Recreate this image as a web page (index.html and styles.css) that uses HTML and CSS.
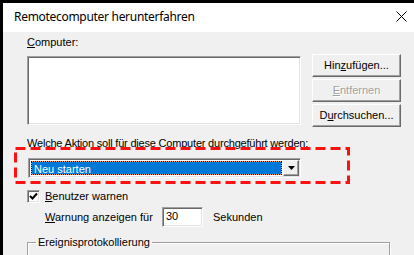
FILE: index.html
```html
<!DOCTYPE html>
<html lang="de">
<head>
<meta charset="UTF-8" />
<meta name="viewport" content="width=device-width, initial-scale=1.0" />
<title>Remotecomputer herunterfahren</title>
<link rel="stylesheet" href="styles.css">
</head>
<body>
<div class="window">
  <!-- Titelleiste -->
  <div class="titlebar">
    <span class="title">Remotecomputer herunterfahren</span>
    <span class="close">
      <svg width="11" height="11" viewBox="0 0 11 11"><path d="M0.5 0.5 L10.5 10.5 M10.5 0.5 L0.5 10.5" stroke="#000" stroke-width="1" fill="none"/></svg>
    </span>
  </div>

  <div class="content">
    <!-- Computerliste -->
    <div class="label"><u>C</u>omputer:</div>
    <div class="computer-row">
      <div class="listbox"></div>
      <div class="side-buttons">
        <button class="btn">Hin<u>z</u>ufügen...</button>
        <button class="btn disabled"><u>E</u>ntfernen</button>
        <button class="btn">D<u>u</u>rchsuchen...</button>
      </div>
    </div>

    <!-- Aktion -->
    <div class="action">
      <div class="label action-label">Welche Aktion soll für diese Computer durchgeführt werden:</div>
      <div class="combo">
        <div class="combo-value">Neu starten</div>
        <div class="combo-arrow">
          <svg width="7" height="4" viewBox="0 0 7 4"><path d="M0 0 H7 L3.5 4 Z" fill="#000"/></svg>
        </div>
      </div>
      <!-- Markierung -->
      <svg class="highlight" width="336" height="37" viewBox="0 0 336 37">
        <rect x="1.5" y="1.5" width="333" height="34" fill="none" stroke="#ff1010" stroke-width="3" stroke-dasharray="10 5"/>
      </svg>
    </div>

    <!-- Benutzer warnen -->
    <div class="check-row">
      <span class="checkbox">
        <svg width="9" height="9" viewBox="0 0 9 9"><path d="M1 4 L3.5 6.5 L8 1.5" stroke="#000" stroke-width="2" fill="none"/></svg>
      </span>
      <span><u>B</u>enutzer warnen</span>
    </div>
    <div class="warn-row">
      <span class="warn-label"><u>W</u>arnung anzeigen für</span>
      <div class="textbox">30</div>
      <span>Sekunden</span>
    </div>

    <!-- Ereignisprotokoll -->
    <fieldset class="group">
      <legend>Ereignisprotokollierung</legend>
    </fieldset>
  </div>
</div>
</body>
</html>
```

FILE: styles.css
```css
/* === Grundlayout === */
body {
  margin: 0;
  padding: 3px 0 0 3px;
  background-color: #000;
  height: 255px;
  overflow: hidden;
  box-sizing: border-box;
}
.window {
  background-color: #f0f0f0;
  height: 100%;
  overflow: hidden;
  font-family: "Liberation Sans", Arial, sans-serif;
  font-size: 11px;
  line-height: 13px;
  color: #000;
}
/* === Titelleiste === */
.titlebar {
  height: 29px;
  background-color: #fff;
  display: flex;
  align-items: center;
  justify-content: space-between;
  padding: 0 7px 0 11px;
}
.title {
  font-family: "Noto Sans", sans-serif;
  font-size: 12px;
  letter-spacing: -0.3px;
  margin-top: -2px;
}
.close {
  display: flex;
  margin-top: -3px;
}
/* === Inhalt === */
.content {
  padding: 4px 0 0 24px;
}
.label {
  margin-bottom: 7px;
}
.computer-row {
  display: flex;
  align-items: flex-start;
}
.listbox {
  width: 274px;
  height: 69px;
  box-sizing: border-box;
  background-color: #fff;
  border: 1px solid;
  border-color: #a0a0a0 #fff #fff #a0a0a0;
  box-shadow: inset 1px 1px 0 #696969, inset -1px -1px 0 #e3e3e3;
}
.side-buttons {
  display: flex;
  flex-direction: column;
  gap: 2px;
  margin: -2px 0 0 11px;
}
.btn {
  width: 89px;
  height: 23px;
  padding: 0;
  font: inherit;
  color: #000;
  background-color: #f0f0f0;
  border: 1px solid;
  border-color: #fff #696969 #696969 #fff;
  box-shadow: inset -1px -1px 0 #a0a0a0;
}
.btn.disabled {
  color: #a0a0a0;
  text-shadow: 1px 1px 0 #fff;
}
/* === Aktion === */
.action {
  position: relative;
  margin-top: 10px;
}
.action-label {
  margin-bottom: 8px;
  letter-spacing: -0.2px;
}
.combo {
  width: 273px;
  height: 20px;
  margin-left: 1px;
  box-sizing: border-box;
  display: flex;
  background-color: #fff;
  border: 1px solid;
  border-color: #a0a0a0 #fff #fff #a0a0a0;
  box-shadow: inset 1px 1px 0 #696969, inset -1px -1px 0 #e3e3e3;
  padding: 2px;
}
.combo-value {
  flex: 1;
  color: #fff;
  padding-left: 2px;
  line-height: 14px;
  border: 1px dotted #111;
  background: linear-gradient(#0078d7, #0078d7) padding-box, #f5a23a border-box;
}
.combo-arrow {
  width: 16px;
  box-sizing: border-box;
  margin: -1px -1px -1px 1px;
  display: flex;
  align-items: center;
  justify-content: center;
  background-color: #f0f0f0;
  border: 1px solid;
  border-color: #fff #696969 #696969 #fff;
  box-shadow: inset -1px -1px 0 #a0a0a0;
}
.highlight {
  position: absolute;
  left: -13px;
  top: 10px;
}
/* === Warnung === */
.check-row {
  display: flex;
  align-items: center;
  gap: 5px;
  margin-top: 12px;
}
.checkbox {
  width: 13px;
  height: 13px;
  box-sizing: border-box;
  display: flex;
  align-items: center;
  justify-content: center;
  background-color: #fff;
  border: 1px solid;
  border-color: #a0a0a0 #fff #fff #a0a0a0;
  box-shadow: inset 1px 1px 0 #696969, inset -1px -1px 0 #e3e3e3;
}
.warn-row {
  display: flex;
  align-items: center;
  margin-top: 4px;
  padding-left: 18px;
}
.warn-label {
  width: 117px;
}
.textbox {
  width: 41px;
  height: 20px;
  box-sizing: border-box;
  padding: 2px 0 0 3px;
  margin-right: 10px;
  background-color: #fff;
  border: 1px solid;
  border-color: #a0a0a0 #fff #fff #a0a0a0;
  box-shadow: inset 1px 1px 0 #696969, inset -1px -1px 0 #e3e3e3;
}
/* === Gruppenfeld === */
.group {
  width: 363px;
  height: 20px;
  box-sizing: border-box;
  margin: 9px 0 0 0;
  padding: 0 0 0 8px;
  border: 1px solid #a0a0a0;
  box-shadow: 1px 1px 0 #fff, inset 1px 1px 0 #fff;
}
.group legend {
  padding: 0 2px;
}
```
